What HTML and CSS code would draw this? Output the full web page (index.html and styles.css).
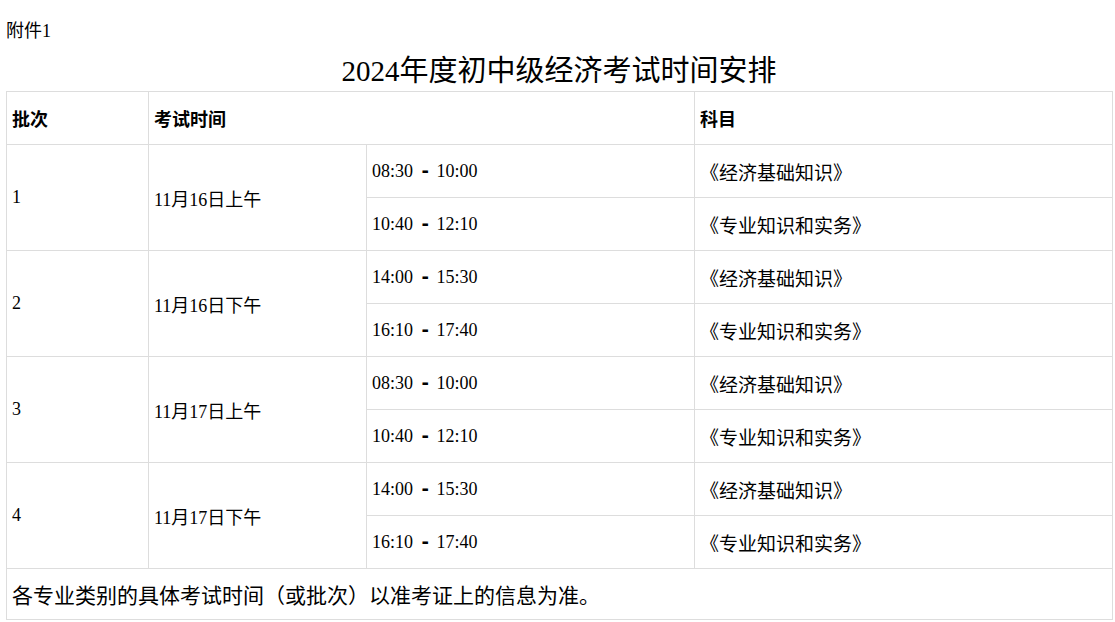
FILE: index.html
```html
<!DOCTYPE html>
<html lang="zh-CN">
<head>
<meta charset="utf-8">
<title>2024年度初中级经济考试时间安排</title>
<link rel="stylesheet" href="styles.css">
</head>
<body>
<div class="page">
  <p class="attach">附件1</p>
  <h1 class="title">2024年度初中级经济考试时间安排</h1>
  <table class="schedule">
    <colgroup>
      <col class="c1"><col class="c2"><col class="c3"><col class="c4">
    </colgroup>
    <thead>
      <tr class="head">
        <th>批次</th>
        <th colspan="2">考试时间</th>
        <th>科目</th>
      </tr>
    </thead>
    <tbody>
      <tr>
        <td rowspan="2">1</td>
        <td rowspan="2">11月16日上午</td>
        <td>08:30 <span class="dash">-</span> 10:00</td>
        <td class="subject">《经济基础知识》</td>
      </tr>
      <tr>
        <td>10:40 <span class="dash">-</span> 12:10</td>
        <td class="subject">《专业知识和实务》</td>
      </tr>
      <tr>
        <td rowspan="2">2</td>
        <td rowspan="2">11月16日下午</td>
        <td>14:00 <span class="dash">-</span> 15:30</td>
        <td class="subject">《经济基础知识》</td>
      </tr>
      <tr>
        <td>16:10 <span class="dash">-</span> 17:40</td>
        <td class="subject">《专业知识和实务》</td>
      </tr>
      <tr>
        <td rowspan="2">3</td>
        <td rowspan="2">11月17日上午</td>
        <td>08:30 <span class="dash">-</span> 10:00</td>
        <td class="subject">《经济基础知识》</td>
      </tr>
      <tr>
        <td>10:40 <span class="dash">-</span> 12:10</td>
        <td class="subject">《专业知识和实务》</td>
      </tr>
      <tr>
        <td rowspan="2">4</td>
        <td rowspan="2">11月17日下午</td>
        <td>14:00 <span class="dash">-</span> 15:30</td>
        <td class="subject">《经济基础知识》</td>
      </tr>
      <tr>
        <td>16:10 <span class="dash">-</span> 17:40</td>
        <td class="subject">《专业知识和实务》</td>
      </tr>
      <tr class="note">
        <td colspan="4">各专业类别的具体考试时间（或批次）以准考证上的信息为准。</td>
      </tr>
    </tbody>
  </table>
</div>
</body>
</html>
```

FILE: styles.css
```css
html, body {
  margin: 0;
  padding: 0;
  background: #ffffff;
}

body {
  font-family: "Liberation Serif", "Noto Sans CJK SC", serif;
  color: #000000;
  font-size: 18px;
}

.page {
  padding: 18px 3px 0 6px;
}

.attach {
  margin: 0;
  font-size: 18px;
  line-height: 26px;
}

.title {
  margin: 7px 0 0;
  font-size: 29px;
  font-weight: normal;
  line-height: 40px;
  text-align: center;
  width: 1106px;
}

.schedule {
  border-collapse: collapse;
  table-layout: fixed;
  width: 1106px;
}

.c1 { width: 142px; }
.c2 { width: 218px; }
.c3 { width: 328px; }
.c4 { width: 418px; }

.schedule th,
.schedule td {
  border: 1px solid #dddddd;
  padding: 0 6px 0 5px;
  text-align: left;
  vertical-align: middle;
  font-size: 18px;
}

.schedule th {
  font-weight: bold;
  font-family: "Liberation Sans", "Noto Sans CJK SC", sans-serif;
}

.schedule tr {
  height: 53px;
}

.schedule td.subject {
  font-size: 19px;
}

.dash {
  font-family: "DejaVu Sans", sans-serif;
  font-weight: bold;
  margin: 0 3px 0 4px;
}

.schedule tr.note {
  height: 51px;
}

.schedule tr.note td {
  font-size: 21px;
}
```
